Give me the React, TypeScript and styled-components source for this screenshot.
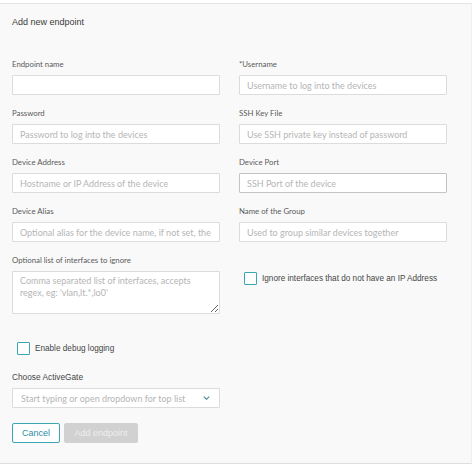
import React from "react";
import styled, { createGlobalStyle } from "styled-components";

const Global = createGlobalStyle`
  html, body { margin: 0; padding: 0; background: #ffffff; }
  body { font-family: "Lato", "Open Sans", sans-serif; }
  * { box-sizing: border-box; }
`;

const Panel = styled.div`
  margin-top: 3px;
  width: 472px;
  height: 461px;
  background: #f9f9f9;
  border-top: 1px solid #e4e4e4;
  border-right: 1px solid #f0f0f0;
  border-bottom: 1px solid #dedede;
  box-shadow: 0 1px 1px rgba(0,0,0,0.04);
  padding: 12px 0 0 12px;
`;

const Title = styled.div`
  font-family: "Liberation Sans", Arial, sans-serif;
  font-size: 9px;
  line-height: 12px;
  color: #3c3c3c;
  margin-bottom: 30px;
`;

const Grid = styled.div`
  display: grid;
  grid-template-columns: 208px 208px;
  column-gap: 19px;
  row-gap: 12px;
  align-items: start;
`;

const Field = styled.div`
  display: flex;
  flex-direction: column;
`;

const Label = styled.label<{ $arial?: boolean }>`
  font-family: ${(p) => (p.$arial ? '"Liberation Sans", Arial, sans-serif' : '"Lato", sans-serif')};
  font-size: ${(p) => (p.$arial ? "8.3px" : "7.8px")};
  line-height: 12px;
  color: ${(p) => (p.$arial ? "#454646" : "#5a5a5a")};
  margin-bottom: 5px;
  white-space: nowrap;
`;

const Input = styled.input<{ $focus?: boolean }>`
  width: 208px;
  height: 20px;
  border: 1px solid ${(p) => (p.$focus ? "#c4c4c4" : "#dcdcdc")};
  border-radius: 1px;
  background: #ffffff;
  padding: 0 7px;
  font-family: "Lato", sans-serif;
  font-size: 9px;
  color: #454646;
  outline: none;
  &::placeholder { color: #b5b5b5; }
`;

const TextArea = styled.textarea`
  width: 208px;
  height: 43px;
  border: 1px solid #dcdcdc;
  border-radius: 1px;
  background: #ffffff;
  padding: 3px 7px;
  font-family: "Lato", sans-serif;
  font-size: 9px;
  line-height: 12px;
  color: #454646;
  outline: none;
  resize: vertical;
  &::placeholder { color: #b5b5b5; }
`;

const CheckRow = styled.label<{ $top?: number }>`
  display: flex;
  align-items: center;
  align-self: start;
  gap: 5px;
  padding-left: 5px;
  padding-top: ${(p) => p.$top ?? 0}px;
  font-family: "Liberation Sans", Arial, sans-serif;
  font-size: 8.2px;
  color: #454646;
  white-space: nowrap;
`;

const Box = styled.span`
  display: inline-block;
  width: 13px;
  height: 13px;
  border: 1.5px solid #3aa5b3;
  border-radius: 1px;
  background: #ffffff;
  flex: none;
`;

const Section = styled.div<{ $top: number }>`
  margin-top: ${(p) => p.$top}px;
`;

const SelectBox = styled.div`
  width: 208px;
  height: 20px;
  border: 1px solid #dcdcdc;
  border-radius: 1px;
  background: #ffffff;
  padding: 0 9px 0 8px;
  display: flex;
  align-items: center;
  justify-content: space-between;
  font-family: "Lato", sans-serif;
  font-size: 9px;
  color: #b5b5b5;
`;

const Buttons = styled.div`
  display: flex;
  gap: 4px;
  margin-top: 15px;
`;

const Button = styled.button<{ $primary?: boolean }>`
  height: 20px;
  padding: 0;
  width: ${(p) => (p.$primary ? "74px" : "48px")};
  border-radius: 2px;
  font-family: "Liberation Sans", Arial, sans-serif;
  font-size: 9px;
  cursor: pointer;
  border: 1px solid ${(p) => (p.$primary ? "#d1d1d1" : "#3aa5b3")};
  background: ${(p) => (p.$primary ? "#d1d1d1" : "#ffffff")};
  color: ${(p) => (p.$primary ? "#eeeeee" : "#2b8ea3")};
`;

const fields: [string, string, boolean?][] = [
  ["Endpoint name", ""],
  ["*Username", "Username to log into the devices"],
  ["Password", "Password to log into the devices"],
  ["SSH Key File", "Use SSH private key instead of password"],
  ["Device Address", "Hostname or IP Address of the device"],
  ["Device Port", "SSH Port of the device", true],
  ["Device Alias", "Optional alias for the device name, if not set, the hostname is used"],
  ["Name of the Group", "Used to group similar devices together"],
];

export default function App() {
  return (
    <>
      <Global />
      <Panel>
        <Title>Add new endpoint</Title>
        <Grid>
          {fields.map(([label, ph, focus]) => (
            <Field key={label}>
              <Label>{label}</Label>
              <Input placeholder={ph} $focus={focus} readOnly />
            </Field>
          ))}
          <Field>
            <Label>Optional list of interfaces to ignore</Label>
            <TextArea placeholder="Comma separated list of interfaces, accepts regex, eg: 'vlan,lt.*,lo0'" readOnly />
          </Field>
          <CheckRow $top={18}>
            <Box />
            <span>Ignore interfaces that do not have an IP Address</span>
          </CheckRow>
        </Grid>
        <Section $top={28}>
          <CheckRow>
            <Box />
            <span>Enable debug logging</span>
          </CheckRow>
        </Section>
        <Section $top={16}>
          <Field>
            <Label $arial>Choose ActiveGate</Label>
            <SelectBox>
              <span>Start typing or open dropdown for top list</span>
              <svg width="7" height="4" viewBox="0 0 7 4">
                <path d="M0.8 0.6 L3.5 3.3 L6.2 0.6" fill="none" stroke="#4f8ea3" strokeWidth="1.2" />
              </svg>
            </SelectBox>
          </Field>
        </Section>
        <Buttons>
          <Button>Cancel</Button>
          <Button $primary disabled>Add endpoint</Button>
        </Buttons>
      </Panel>
    </>
  );
}
